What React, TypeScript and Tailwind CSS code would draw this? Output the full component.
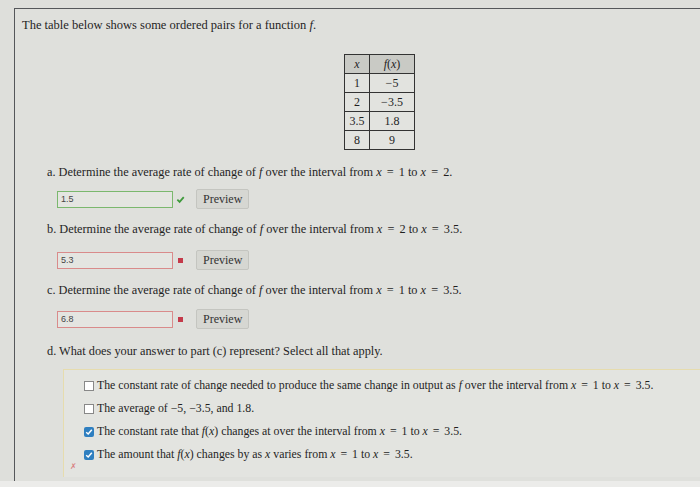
import React from 'react';

const serif = { fontFamily: '"Liberation Serif", "Times New Roman", serif' };

function X() {
  return <i>x</i>;
}

function Eq({ v }: { v: string }) {
  return (
    <>
      <X /> <span className="mx-[2px]">=</span> {v}
    </>
  );
}

function Preview() {
  return (
    <button className="h-[20px] px-[6px] border border-[#c4c5c0] bg-[#d6d7d2] rounded-[2px] text-[12px] text-[#333] leading-none">
      Preview
    </button>
  );
}

function Answer({ value, ok, top }: { value: string; ok: boolean; top: string }) {
  return (
    <div className={'flex items-center ' + top}>
      <div
        className={
          'w-[116px] h-[17px] border flex items-center px-[3px] bg-[#e4e5e1] ' +
          (ok ? 'border-[#7bb86e]' : 'border-[#d98b8b]')
        }
      >
        <span className="text-[9px] text-[#444]" style={{ fontFamily: '"Liberation Sans", Arial, sans-serif' }}>
          {value}
        </span>
      </div>
      {ok ? (
        <svg width="9" height="9" viewBox="0 0 10 10" className="ml-[3px]">
          <path d="M1.5 5.2 L4 7.6 L8.6 2.4" stroke="#3f9a3c" strokeWidth="2" fill="none" />
        </svg>
      ) : (
        <div className="w-[5px] h-[5px] bg-[#c43a4a] ml-[5px] mr-[2px]" />
      )}
      <div className="ml-[11px]">
        <Preview />
      </div>
    </div>
  );
}

function Box({ checked }: { checked: boolean }) {
  return checked ? (
    <span className="inline-flex w-[10px] h-[10px] bg-[#2f7fc0] rounded-[2px] items-center justify-center mr-[3px] shrink-0">
      <svg width="8" height="8" viewBox="0 0 8 8">
        <path d="M1.2 4.2 L3.2 6 L6.8 1.8" stroke="#fff" strokeWidth="1.5" fill="none" />
      </svg>
    </span>
  ) : (
    <span className="inline-block w-[10px] h-[10px] bg-white border border-[#888] mr-[3px] shrink-0" />
  );
}

export default function App() {
  const rows = [
    ['1', '−5'],
    ['2', '−3.5'],
    ['3.5', '1.8'],
    ['8', '9'],
  ];
  return (
    <div className="w-[700px] h-[487px] bg-[#ececea] overflow-hidden text-[#1f1f1f]" style={serif}>
      <div className="h-[481px] bg-[#dedfdb] pt-[8px] pl-[14px]">
        <div className="h-[473px] border-l border-t border-[#55575a] bg-[#dfe0dc]">
          <div className="pl-[7px] pt-[7px] text-[12.5px] leading-[18px]">
            The table below shows some ordered pairs for a function <i>f</i>.
          </div>
          <div className="flex justify-center mt-[20px]">
            <table className="border-collapse text-[12px] text-center ml-[44px]">
              <thead>
                <tr className="bg-[#c9cac5] h-[18px]">
                  <th className="border border-[#333] w-[25px] font-normal"><i>x</i></th>
                  <th className="border border-[#333] w-[45px] font-normal">
                    <i>f</i>(<i>x</i>)
                  </th>
                </tr>
              </thead>
              <tbody>
                {rows.map(([a, b]) => (
                  <tr key={a} className="h-[19px] bg-[#e2e3df]">
                    <td className="border border-[#333] leading-none">{a}</td>
                    <td className="border border-[#333] leading-none">{b}</td>
                  </tr>
                ))}
              </tbody>
            </table>
          </div>

          <div className="pl-[32px] mt-[13px] text-[12.3px] leading-[18px]">
            <div>
              a. Determine the average rate of change of <i>f</i> over the interval from <Eq v="1" /> to <Eq v="2" />.
            </div>
            <div className="pl-[10px]">
              <Answer value="1.5" ok top="mt-[8px]" />
            </div>
            <div className="mt-[11px]">
              b. Determine the average rate of change of <i>f</i> over the interval from <Eq v="2" /> to <Eq v="3.5" />.
            </div>
            <div className="pl-[10px]">
              <Answer value="5.3" ok={false} top="mt-[12px]" />
            </div>
            <div className="mt-[11px]">
              c. Determine the average rate of change of <i>f</i> over the interval from <Eq v="1" /> to <Eq v="3.5" />.
            </div>
            <div className="pl-[10px]">
              <Answer value="6.8" ok={false} top="mt-[10px]" />
            </div>
            <div className="mt-[13px]">
              d. What does your answer to part (c) represent? Select all that apply.
            </div>
          </div>

          <div className="ml-[48px] mt-[9px] h-[108px] border-l border-t border-[#e6dcae] bg-[#e3e4e0] pl-[20px] pt-[4px] text-[11.8px] relative">
            <div className="flex items-center h-[23px]">
              <Box checked={false} />
              <span>
                The constant rate of change needed to produce the same change in output as <i>f</i> over the interval from <Eq v="1" /> to <Eq v="3.5" />.
              </span>
            </div>
            <div className="flex items-center h-[23px]">
              <Box checked={false} />
              <span>The average of −5, −3.5, and 1.8.</span>
            </div>
            <div className="flex items-center h-[23px]">
              <Box checked />
              <span>
                The constant rate that <i>f</i>(<i>x</i>) changes at over the interval from <Eq v="1" /> to <Eq v="3.5" />.
              </span>
            </div>
            <div className="flex items-center h-[23px]">
              <Box checked />
              <span>
                The amount that <i>f</i>(<i>x</i>) changes by as <i>x</i> varies from <Eq v="1" /> to <Eq v="3.5" />.
              </span>
            </div>
            <span className="absolute left-[6px] bottom-[4px] text-[8px] text-[#d98080]">✗</span>
          </div>
        </div>
      </div>
    </div>
  );
}
